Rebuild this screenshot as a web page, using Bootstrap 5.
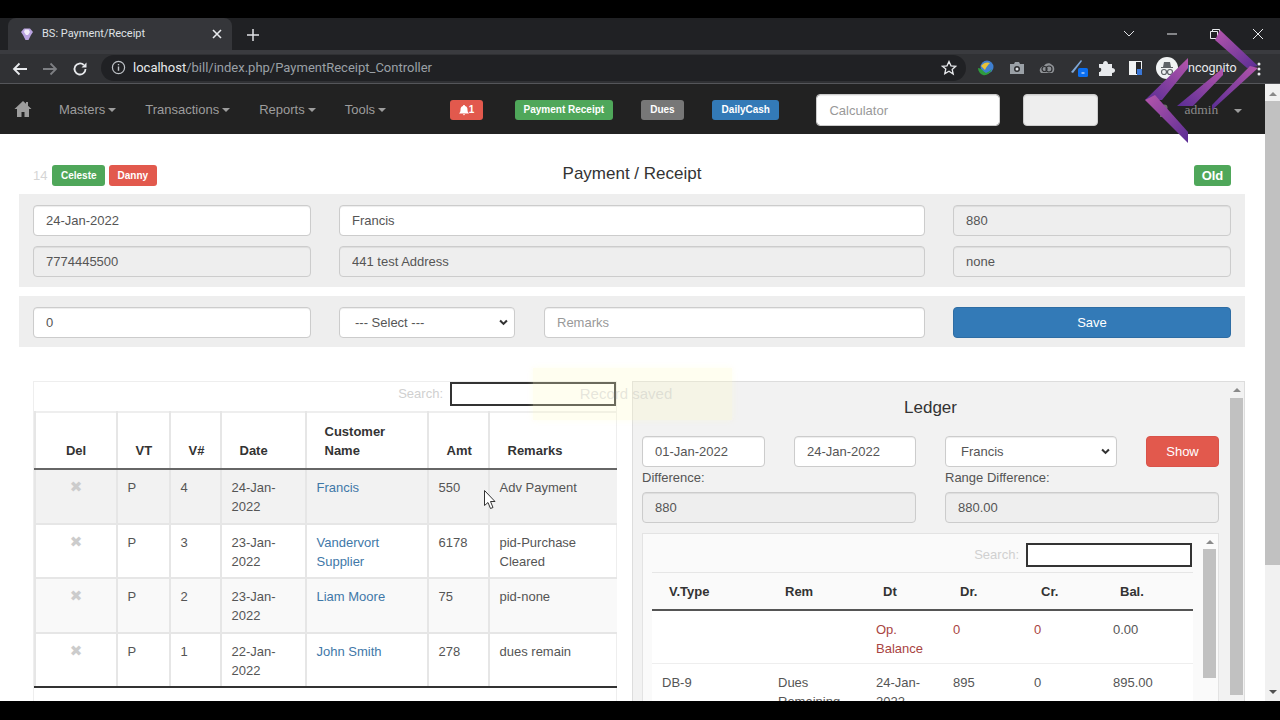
<!DOCTYPE html>
<html lang="en">
<head>
<meta charset="utf-8">
<title>BS: Payment/Receipt</title>
<link href="https://cdn.jsdelivr.net/npm/bootstrap@5.3.0/dist/css/bootstrap.min.css" rel="stylesheet">
<style>
html,body{margin:0;height:720px;overflow:hidden;background:#000}
body{font-family:"Liberation Sans",Arial,sans-serif;font-size:13px;line-height:19px;color:#555}
.shot{position:relative;width:1280px;height:720px;background:#000;overflow:hidden;padding:18px 0 19px}
.frame{height:683px;display:flex;flex-direction:column;overflow:hidden}
.tabstrip{height:32px;background:#202124;display:flex;align-items:flex-end;padding-left:8px;flex:none;position:relative}
.tab-active{width:224px;height:32px;background:#35363a;border-radius:8px 8px 0 0;display:flex;align-items:center;padding:0 10px 0 12px;color:#dfe1e5;font:11px/16px Roboto,sans-serif}
.tab-title{flex:1;margin-left:8px}
.newtab{margin:0 0 9px 15px;line-height:0}
.capbtns{margin-left:auto;display:flex;align-items:center;height:32px;padding-right:16px;gap:31px;margin-top:-1px}
.toolbar{height:34px;background:#303134;border-top:4px solid #3a3b3f;border-bottom:1px solid #55565a;display:flex;align-items:center;flex:none;padding-left:12px}
.navic{width:16px;height:16px;margin-right:14px;flex:none;display:block}
.pill{width:865px;margin-left:-1px;height:26px;background:#202124;border-radius:13px;display:flex;align-items:center;padding:0 9px 0 10px;font:13px/18px Roboto,sans-serif;color:#9aa0a6;flex:none;margin-top:-2px}
.pill b{font-weight:400;color:#e8eaed}
.urltext{margin-left:7px;flex:1}
.exts{display:flex;align-items:center;flex:1;position:relative;height:100%}
.ext{position:absolute;top:5px;width:18px;height:18px}
.e1{left:11px}.e2{left:42px}.e3{left:72px}.e4{left:104px}.e5{left:131px}.e6{left:161px}
.avatar{position:absolute;left:190px;top:3px;width:22px;height:22px;border-radius:50%;background:#f1f3f4}
.incog{position:absolute;left:222px;top:5px;color:#e8eaed;font:12.5px/18px Roboto,sans-serif}
.dots{position:absolute;left:291px;top:7px}
.pagearea{flex:1;display:flex;min-height:0}
.pagemain{flex:1;min-width:0;display:flex;flex-direction:column;background:#fff}
.navdark{height:50px;background:#222;display:flex;align-items:center;flex:none;padding-left:14px}
.homeic{width:18px;height:18px;margin-right:27px;flex:none}
.menuitem{color:#9d9d9d;font-size:13px;margin-right:29px;white-space:nowrap}
.caretd{display:inline-block;width:0;height:0;border-left:4px solid transparent;border-right:4px solid transparent;border-top:4px solid #9d9d9d;vertical-align:2px;margin-left:3px}
.pbtn{font-size:10px;font-weight:700;line-height:14px;color:#fff;height:20px;padding:0 9.500px;border-radius:3px;border:0;white-space:nowrap;margin-top:2px;flex:none}
.pb-bell{margin-left:35px;width:33px;padding:0}
.pb-pay{margin-left:32px;padding:0 8.500px}
.pb-next{margin-left:28px}
.bg-r{background:#e2594d}.bg-g{background:#4fa75a}.bg-gr{background:#777}.bg-b{background:#337ab7}
.calc{width:184px!important;height:32px!important;margin:2px 0 0 37px;flex:none}
.calc2{width:75px!important;height:32px!important;margin:2px 0 0 23px;background:#eee!important;flex:none}
.personic{margin:2px 0 0 62px;flex:none}
.admin{font:13.5px/19px "Liberation Serif",serif;color:#8a8a8a;margin:1px 0 0 15px}
.titlerow{display:grid;grid-template-columns:1fr auto 1fr;align-items:flex-start;height:29px;margin:31px 34px 0 33px}
.leftbadges{display:flex}
.faint14{color:#d5d5d5;margin:0 5px 0 0;line-height:21px}
.lbl{font-size:10px;font-weight:700;color:#fff;height:21px;line-height:21px;padding:0 8.500px;border-radius:3px;margin-right:4px}
.pagetitle{text-align:center;font-size:17px;line-height:17px;color:#333;white-space:nowrap}
.rightbadge{display:flex;justify-content:flex-end}
.oldb{font-size:13px;font-weight:700;color:#fff;height:21px;line-height:21px;padding:0 7.700px;border-radius:3px;background:#4fa75a}
.panelg{margin:0 20px 0 19px;background:#eee;padding:11px 14px 10px}
.g3{display:grid;grid-template-columns:278px 586px 278px;gap:10px 28px}
.form-control.fc,.form-select.fc{font-size:13px;line-height:19px;height:31px;padding:5px 12px;border:1px solid #ccc;border-radius:4px;color:#555;box-shadow:inset 0 1px 1px rgba(0,0,0,.075);background-color:#fff}
.form-control.fc:disabled{background:#eee;opacity:1}
.form-control.fc::placeholder{color:#999}
.form-select.fc{padding-left:15px;background-image:url("data:image/svg+xml,%3csvg xmlns='http://www.w3.org/2000/svg' viewBox='0 0 16 16'%3e%3cpath fill='none' stroke='%23333' stroke-width='3' d='M3 5l5 5 5-5'/%3e%3c/svg%3e");background-size:11px 11px;background-position:right 5px center}
.mid2{display:flex;gap:29px}
.sel1{width:176px;flex:none}
.panel2{margin-top:9px;padding-bottom:9px}
.savebtn{background:#337ab7;height:31px;border:1px solid #2e6da4;border-radius:4px;color:#fff;font-size:13px;padding:0}
.lower{display:flex;gap:15px;margin:34px 20px 0 33px;flex:1;min-height:0;overflow:hidden}
.lbox{width:584px;flex:none;border:1px solid #eee;border-bottom:0}
.searchrow{display:flex;justify-content:flex-end;align-items:flex-start;height:29px}
.searchlab{color:#d0d0d0;margin-right:7px;line-height:23px}
.sbox{width:166px;height:24px;border:2px solid #333;background:#fff;flex:none}
.tb{width:582px;table-layout:fixed;border-collapse:collapse;color:#555;border-top:2px solid #eee}
.tb th{font-weight:700;color:#333;vertical-align:bottom;padding:9px 10px 8px 17.500px;border:2px solid #e6e6e6;border-top:0;border-bottom:2px solid #666;line-height:19px}
.tb td{vertical-align:top;padding:8px 10px 6.500px 9.500px;border:2px solid #e6e6e6;border-top:0;line-height:19px}
.tb tr:last-child td{border-bottom:2px solid #333}
.tb th:last-child,.tb td:last-child{border-right:0}
.tb a,.tb a:hover{color:#3f78a8;text-decoration:none}
.tb .center{text-align:center;padding-left:0;padding-right:0}
.r1{background:#f2f2f2}.r3{background:#f9f9f9}
.xm{color:#ccc;font:15px/17px "DejaVu Sans",sans-serif}
.c1{width:82px}.c2{width:53px}.c3{width:51px}.c4{width:85px}.c5{width:122px}.c6{width:61px}.c7{width:128px}
.rbox{width:613px;flex:none;background:#f2f2f2;border:1px solid #ddd;border-bottom:0;display:flex;padding-left:9px}
.rmain{width:577px;flex:none}
.ledger{font-size:17px;line-height:20px;color:#333;text-align:center;margin:16px 0 18px}
.toprow{display:flex;gap:29px}
.w123{width:123px!important;flex:none}.w122{width:122px!important;flex:none}.w172{width:172px!important;flex:none}
.showbtn{width:73px;height:31px;background:#e2594d;border:1px solid #d9534a;border-radius:4px;color:#fff;font-size:13px;padding:0;flex:none}
.g2{display:grid;grid-template-columns:274px 274px;gap:0 29px;margin-top:1px}
.g2 label{color:#555;line-height:19px;height:24px;display:block}
.inner{margin-top:10px;width:577px;background:#fafafa;border:1px solid #e3e3e3;border-bottom:0;display:flex;padding:0 0 0 9px;height:400px}
.inmain{width:541px;flex:none;padding-top:9px}
.searchrow2{display:flex;justify-content:flex-end;align-items:flex-start;height:30px;border-bottom:1px solid #e6e6e6;padding-right:1px}
.tl{width:541px;table-layout:fixed;border-collapse:collapse;color:#555}
.tl th{font-weight:700;color:#333;padding:9px 10px 8px 17px;border-bottom:2px solid #555;line-height:19px}
.tl td{vertical-align:top;padding:9px 10px 5px;line-height:19px;border-bottom:1px solid #eee;background:#fff}
.tl .red{color:#a94442}
.l1{width:116px}.l2{width:98px}.l3{width:77px}.l4{width:81px}.l5{width:79px}.l6{width:90px}
.sb{width:15px;flex:none;background:#f1f1f1;display:flex;flex-direction:column;align-items:center}
.sb .thumb{background:#c1c1c1;width:100%}
.ua{width:0;height:0;border-left:4px solid transparent;border-right:4px solid transparent;border-bottom:4px solid #8a8a8a}
.da{width:0;height:0;border-left:4px solid transparent;border-right:4px solid transparent;border-top:4px solid #505050}
.outer-thumb{height:464px;margin-top:5px}
.outer-ua{margin-top:8px}
.outer-da{margin-top:125px}
.rsb{width:13px;margin-left:11px;background:#f2f2f2}
.rsb .thumb{height:297px;margin-top:6px}
.rsb .ua{margin-top:6px}
.isb{width:13px;margin-left:10px;background:#fafafa}
.isb .thumb{height:129px;margin-top:5px}
.isb .ua{margin-top:6px}
.over{position:absolute}
.toast1{left:533px;top:368px;width:199px;height:52px;background:rgba(255,252,200,.28);text-align:center;line-height:52px;font-size:15px;padding-right:13px;color:rgba(170,170,170,.3);box-shadow:0 0 6px rgba(255,252,200,.3)}
.wm{left:0;top:0;width:1280px;height:720px;pointer-events:none}
.cursorp{left:484px;top:490px}
</style>
</head>
<body>
<div class="shot">
 <div class="frame">
  <div class="tabstrip">
   <div class="tab-active">
    <svg width="14" height="14" viewBox="0 0 14 14"><path d="M4 1.500h6l3 3.500-2 3-2.500 5h-3L3 8 1 5z" fill="#b9a2e0"/><path d="M5 2.500h3.500L10 5 8 8H6L4 5z" fill="#f2ecfa"/></svg>
    <span class="tab-title">BS: Payment/Receipt</span>
    <svg width="10" height="10" viewBox="0 0 10 10"><path d="M1 1l8 8M9 1l-8 8" stroke="#e8eaed" stroke-width="1.600"/></svg>
   </div>
   <svg class="newtab" width="12" height="12" viewBox="0 0 12 12"><path d="M6 0v12M0 6h12" stroke="#dfe1e5" stroke-width="1.500"/></svg>
   <div class="capbtns">
    <svg width="12" height="8" viewBox="0 0 12 8"><path d="M1 1l5 5 5-5" fill="none" stroke="#dfe1e5" stroke-width="1"/></svg>
    <svg width="12" height="12" viewBox="0 0 12 12"><path d="M1 6h10" stroke="#e8eaed" stroke-width="1"/></svg>
    <svg width="12" height="12" viewBox="0 0 12 12"><path d="M1.500 3.500h7v7h-7zM3.500 3.500v-2h7v7h-2" fill="none" stroke="#e8eaed" stroke-width="1"/></svg>
    <svg width="12" height="12" viewBox="0 0 12 12"><path d="M1 1l10 10M11 1L1 11" stroke="#e8eaed" stroke-width="1"/></svg>
   </div>
  </div>
  <div class="toolbar">
   <svg class="navic" viewBox="0 0 16 16"><path d="M15 8H2M7.500 2.500L2 8l5.500 5.500" fill="none" stroke="#e8eaed" stroke-width="1.800"/></svg>
   <svg class="navic" viewBox="0 0 16 16"><path d="M1 8h13M8.500 2.500L14 8l-5.500 5.500" fill="none" stroke="#7d7f83" stroke-width="1.800"/></svg>
   <svg class="navic" viewBox="0 0 16 16"><path d="M13.500 8A5.500 5.500 0 1 1 11.800 4" fill="none" stroke="#e8eaed" stroke-width="1.800"/><path d="M14.500 1.500v5h-5z" fill="#e8eaed"/></svg>
   <div class="pill">
    <svg width="15" height="15" viewBox="0 0 16 16"><circle cx="8" cy="8" r="6.500" fill="none" stroke="#bdc1c6" stroke-width="1.300"/><path d="M8 7v4.500M8 4.200v1.500" stroke="#bdc1c6" stroke-width="1.500"/></svg>
    <span class="urltext"><b>localhost</b>/bill/index.php/PaymentReceipt_Controller</span>
    <svg width="16" height="16" viewBox="0 0 16 16"><path d="M8 1.500l2 4.300 4.700.5-3.500 3.200 1 4.600L8 11.200l-4.200 2.400 1-4.600L1.300 6.300 6 5.800z" fill="none" stroke="#e8eaed" stroke-width="1.300"/></svg>
   </div>
   <div class="exts">
    <svg class="ext e1" viewBox="0 0 18 18"><circle cx="10" cy="8" r="6.500" fill="#3f7fd0"/><path d="M4 7c3-4 7-4 9-3-2 2-4 4-5 7z" fill="#e8c23a"/><path d="M1 9c3 0 5 3 8 5 2-1 4-2 6-4-2 5-6 7-9 6-3-1-5-4-5-7z" fill="#2e9b3d"/></svg>
    <svg class="ext e2" viewBox="0 0 18 18"><path d="M2 5h4l1-2h4l1 2h4v10H2z" fill="#9aa0a6"/><circle cx="9" cy="10" r="3" fill="#2c2d30"/><circle cx="9" cy="10" r="1.500" fill="#dfe1e5"/></svg>
    <svg class="ext e3" viewBox="0 0 18 18"><path d="M3 14c-3-3 0-7 3-7 1-3 6-4 8-1 3 1 3 7 0 8z" fill="#8f9296"/><circle cx="11" cy="10" r="3" fill="none" stroke="#2c2d30" stroke-width="1.200"/><circle cx="6.500" cy="10" r="2.500" fill="none" stroke="#2c2d30" stroke-width="1.200"/></svg>
    <svg class="ext e4" viewBox="0 0 18 18"><path d="M1 13L11 1l1 1L3 14z" fill="#7fa8d8"/><rect x="8" y="9" width="10" height="9" rx="1.500" fill="#0b6ef0"/><path d="M11.500 14h3" stroke="#fff"/></svg>
    <svg class="ext e5" viewBox="0 0 18 18"><path d="M2 5h4c0-4 5-4 5 0h4v4c4 0 4 5 0 5v3H2v-4c3 0 3-5 0-4z" fill="#e8eaed"/></svg>
    <svg class="ext e6" viewBox="0 0 18 18"><rect x="2" y="2" width="13" height="14" fill="#f1f3f4"/><rect x="9" y="3" width="5" height="12" fill="#26272a"/><rect x="10" y="10" width="5" height="6" fill="#3b78d8"/></svg>
    <div class="avatar"><svg width="22" height="22" viewBox="0 0 22 22"><path d="M5 10h12v1H5zM8 5h6l1 5H7z" fill="#5f6368"/><circle cx="8" cy="15" r="2.500" fill="none" stroke="#5f6368" stroke-width="1.200"/><circle cx="14" cy="15" r="2.500" fill="none" stroke="#5f6368" stroke-width="1.200"/></svg></div>
    <span class="incog">ncognito</span>
    <svg class="dots" width="4" height="16" viewBox="0 0 4 16"><circle cx="2" cy="3" r="1.500" fill="#e8eaed"/><circle cx="2" cy="8" r="1.500" fill="#e8eaed"/><circle cx="2" cy="13" r="1.500" fill="#e8eaed"/></svg>
   </div>
  </div>
  <div class="pagearea">
   <div class="pagemain">
    <nav class="navdark">
     <svg class="homeic" viewBox="0 0 18 18"><path d="M9 1L0.500 9H3v8h4.500v-5h3v5H15V9h2.500L14 5.700V2h-2v1.800z" fill="#9d9d9d"/></svg>
     <span class="menuitem">Masters<span class="caretd"></span></span>
     <span class="menuitem">Transactions<span class="caretd"></span></span>
     <span class="menuitem">Reports<span class="caretd"></span></span>
     <span class="menuitem">Tools<span class="caretd"></span></span>
     <button class="pbtn pb-bell bg-r"><svg width="10" height="11" viewBox="0 0 10 11"><path d="M5 0c.6 0 1 .4 1 1 2 .5 2.500 2 2.500 4 0 1.500.5 2.500 1.500 3.500H0C1 7.500 1.500 6.500 1.500 5c0-2 .5-3.500 2.500-4 0-.6.4-1 1-1zM4 9.300h2a1 1 0 0 1-2 0z" fill="#fff"/></svg>1</button>
     <button class="pbtn pb-pay bg-g">Payment Receipt</button>
     <button class="pbtn pb-next bg-gr">Dues</button>
     <button class="pbtn pb-next bg-b">DailyCash</button>
     <input class="form-control fc calc" placeholder="Calculator" aria-label="Calculator">
     <input class="form-control fc calc2" aria-label="Blank">
     <svg class="personic" width="9" height="13" viewBox="0 0 9 13"><circle cx="4.500" cy="3.500" r="3" fill="#6b6b6b"/><path d="M0 13c0-4 2-6 4.500-6S9 9 9 13z" fill="#6b6b6b"/></svg>
     <span class="admin">admin</span><span class="caretd ms-3 mt-1"></span>
    </nav>
    <div class="titlerow">
     <div class="leftbadges"><span class="faint14">14</span><span class="lbl bg-g">Celeste</span><span class="lbl bg-r">Danny</span></div>
     <span class="pagetitle">Payment / Receipt</span>
     <div class="rightbadge"><span class="oldb">Old</span></div>
    </div>
    <div class="panelg g3">
     <input class="form-control fc" value="24-Jan-2022" aria-label="Date">
     <input class="form-control fc" value="Francis" aria-label="Customer">
     <input class="form-control fc" value="880" disabled aria-label="Balance">
     <input class="form-control fc" value="7774445500" disabled aria-label="Phone">
     <input class="form-control fc" value="441 test Address" disabled aria-label="Address">
     <input class="form-control fc" value="none" disabled aria-label="Note">
    </div>
    <div class="panelg panel2 g3">
     <input class="form-control fc" value="0" aria-label="Amount">
     <div class="mid2">
      <select class="form-select fc sel1" aria-label="Type"><option>--- Select ---</option></select>
      <input class="form-control fc" placeholder="Remarks" aria-label="Remarks">
     </div>
     <button class="savebtn">Save</button>
    </div>
    <div class="lower">
     <div class="lbox">
      <div class="searchrow"><span class="searchlab">Search:</span><div class="sbox"></div></div>
      <table class="tb">
       <colgroup><col class="c1"><col class="c2"><col class="c3"><col class="c4"><col class="c5"><col class="c6"><col class="c7"></colgroup>
       <thead><tr><th class="center">Del</th><th>VT</th><th>V#</th><th>Date</th><th>Customer Name</th><th>Amt</th><th>Remarks</th></tr></thead>
       <tbody>
        <tr class="r1"><td class="center"><span class="xm">✖</span></td><td>P</td><td>4</td><td>24-Jan-2022</td><td><a href="#">Francis</a></td><td>550</td><td>Adv Payment</td></tr>
        <tr><td class="center"><span class="xm">✖</span></td><td>P</td><td>3</td><td>23-Jan-2022</td><td><a href="#">Vandervort Supplier</a></td><td>6178</td><td>pid-Purchase Cleared</td></tr>
        <tr class="r3"><td class="center"><span class="xm">✖</span></td><td>P</td><td>2</td><td>23-Jan-2022</td><td><a href="#">Liam Moore</a></td><td>75</td><td>pid-none</td></tr>
        <tr><td class="center"><span class="xm">✖</span></td><td>P</td><td>1</td><td>22-Jan-2022</td><td><a href="#">John Smith</a></td><td>278</td><td>dues remain</td></tr>
       </tbody>
      </table>
     </div>
     <div class="rbox">
      <div class="rmain">
       <div class="ledger">Ledger</div>
       <div class="toprow">
        <input class="form-control fc w123" value="01-Jan-2022" aria-label="From">
        <input class="form-control fc w122" value="24-Jan-2022" aria-label="To">
        <select class="form-select fc w172" aria-label="Customer"><option>Francis</option></select>
        <button class="showbtn">Show</button>
       </div>
       <div class="g2">
        <div><label>Difference:</label><input class="form-control fc" value="880" disabled aria-label="Difference"></div>
        <div><label>Range Difference:</label><input class="form-control fc" value="880.00" disabled aria-label="Range Difference"></div>
       </div>
       <div class="inner">
        <div class="inmain">
         <div class="searchrow2"><span class="searchlab">Search:</span><div class="sbox"></div></div>
         <table class="tl">
          <colgroup><col class="l1"><col class="l2"><col class="l3"><col class="l4"><col class="l5"><col class="l6"></colgroup>
          <thead><tr><th>V.Type</th><th>Rem</th><th>Dt</th><th>Dr.</th><th>Cr.</th><th>Bal.</th></tr></thead>
          <tbody>
           <tr><td></td><td></td><td class="red">Op. Balance</td><td class="red">0</td><td class="red">0</td><td>0.00</td></tr>
           <tr><td>DB-9</td><td>Dues Remaining</td><td>24-Jan-2022</td><td>895</td><td>0</td><td>895.00</td></tr>
          </tbody>
         </table>
        </div>
        <div class="sb isb"><div class="ua"></div><div class="thumb"></div></div>
       </div>
      </div>
      <div class="sb rsb"><div class="ua"></div><div class="thumb"></div></div>
     </div>
    </div>
   </div>
   <div class="sb"><div class="ua outer-ua"></div><div class="thumb outer-thumb"></div><div class="da outer-da"></div></div>
  </div>
 </div>
 <div class="over toast1">Record saved</div>
 <svg class="over cursorp" width="12" height="20" viewBox="0 0 12 20"><path d="M0.500 0.500v15l3.500-3 2.500 6 2.500-1-2.500-6H11z" fill="#fff" stroke="#333" stroke-width="1"/></svg>
 <svg class="over wm" viewBox="0 0 1280 720">
  <defs>
   <linearGradient id="gd" x1="0" y1="0" x2="1" y2="1"><stop offset="0" stop-color="#b556ac"/><stop offset="1" stop-color="#5a2d94"/></linearGradient>
   <linearGradient id="gu" x1="1" y1="0" x2="0" y2="1"><stop offset="0" stop-color="#b556ac"/><stop offset="1" stop-color="#5a2d94"/></linearGradient>
  </defs>
  <polygon points="1188,58 1188,68 1162,100 1145,100" fill="url(#gu)"/>
  <polygon points="1145,100 1155,95 1188,132 1188,143" fill="url(#gd)"/>
  <polygon points="1223,68 1177,106 1193,106 1223,75" fill="url(#gu)"/>
  <polygon points="1220,30 1258,66 1247,68 1215,40" fill="url(#gd)"/>
  <polygon points="1258,68 1212,110 1212,105 1250,66" fill="url(#gu)"/>
 </svg>
</div>
</body>
</html>
